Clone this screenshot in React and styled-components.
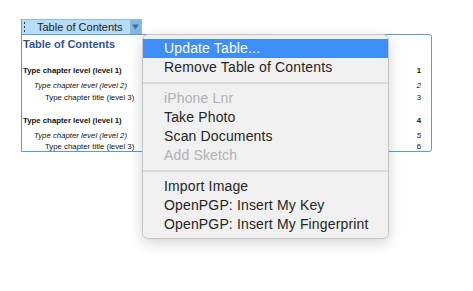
import React from "react";
import styled, { createGlobalStyle } from "styled-components";

const GlobalStyle = createGlobalStyle`
  html, body {
    margin: 0;
    padding: 0;
    background: #ffffff;
    font-family: "Liberation Sans", Arial, sans-serif;
  }
`;

const Page = styled.div`
  position: relative;
  width: 473px;
  height: 291px;
  padding: 19px 0 0 21px;
  box-sizing: border-box;
`;

const Tab = styled.div`
  display: flex;
  align-items: stretch;
  width: 121px;
  height: 15px;
  box-sizing: border-box;
  background: #b6dcf6;
  border: 1px solid #8fbde3;
  border-bottom: none;
  border-left-color: #5b9bd5;
`;

const Handle = styled.div`
  width: 5px;
  display: flex;
  flex-direction: column;
  justify-content: center;
  align-items: center;
  gap: 2px;
  span {
    width: 1px;
    height: 2px;
    background: #1f3f66;
  }
`;

const TabLabel = styled.div`
  flex: 1;
  font-size: 11px;
  line-height: 14px;
  color: #1c1c1c;
  padding-left: 10px;
  white-space: nowrap;
`;

const TabArrow = styled.div`
  width: 11px;
  background: #86b7df;
  display: flex;
  align-items: center;
  justify-content: center;
`;

const Box = styled.div`
  width: 411px;
  height: 118px;
  box-sizing: border-box;
  border: 1px solid #5b9bd5;
  border-radius: 0 3px 3px 0;
  padding: 1px 10px 0 1px;
  font-family: "Liberation Sans", Arial, sans-serif;
`;

const Heading = styled.div`
  font-size: 11px;
  line-height: 16px;
  font-weight: bold;
  color: #2f5496;
  margin-bottom: 13px;
`;

const Entry = styled.div`
  display: flex;
  justify-content: space-between;
  font-size: 7.8px;
  line-height: 11px;
  color: #111;
  margin-top: ${(p) => p.$gap}px;
  padding-left: ${(p) => (p.$level - 1) * 11}px;
  font-weight: ${(p) => (p.$level === 1 ? "bold" : "normal")};
  font-style: ${(p) => (p.$level === 2 ? "italic" : "normal")};
`;

const Menu = styled.div`
  position: absolute;
  left: 142px;
  top: 34px;
  width: 247px;
  box-sizing: border-box;
  padding: 4px 0;
  background: #f0f0f0;
  border: 1px solid #c6c6c6;
  border-radius: 6px;
  box-shadow: 0 4px 14px rgba(0, 0, 0, 0.18);
  font-family: "Liberation Sans", Arial, sans-serif;
`;

const Item = styled.div`
  height: 19px;
  line-height: 19px;
  padding-left: 21px;
  font-size: 14px;
  letter-spacing: 0.15px;
  white-space: nowrap;
  color: ${(p) => (p.$active ? "#ffffff" : p.$disabled ? "#b1b1b1" : "#252525")};
  background: ${(p) => (p.$active ? "#3d8ef6" : "transparent")};
`;

const Separator = styled.div`
  height: 2px;
  background: #dadada;
  margin: 5px 0 5px;
`;

const toc = [
  { level: 1, text: "Type chapter level (level 1)", num: "1", gap: 0 },
  { level: 2, text: "Type chapter level (level 2)", num: "2", gap: 4 },
  { level: 3, text: "Type chapter title (level 3)", num: "3", gap: 1 },
  { level: 1, text: "Type chapter level (level 1)", num: "4", gap: 12 },
  { level: 2, text: "Type chapter level (level 2)", num: "5", gap: 4 },
  { level: 3, text: "Type chapter title (level 3)", num: "6", gap: 0 },
];

const menu = [
  [{ label: "Update Table...", active: true }, { label: "Remove Table of Contents" }],
  [
    { label: "iPhone Lnr", disabled: true },
    { label: "Take Photo" },
    { label: "Scan Documents" },
    { label: "Add Sketch", disabled: true },
  ],
  [
    { label: "Import Image" },
    { label: "OpenPGP: Insert My Key" },
    { label: "OpenPGP: Insert My Fingerprint" },
  ],
];

export default function App() {
  return (
    <Page>
      <GlobalStyle />
      <Tab>
        <Handle>
          <span />
          <span />
          <span />
        </Handle>
        <TabLabel>Table of Contents</TabLabel>
        <TabArrow>
          <svg width="7" height="6" viewBox="0 0 7 6">
            <path d="M0 0.5 L7 0.5 L3.5 5.5 Z" fill="#2f6fb6" />
          </svg>
        </TabArrow>
      </Tab>
      <Box>
        <Heading>Table of Contents</Heading>
        {toc.map((e, i) => (
          <Entry key={i} $level={e.level} $gap={e.gap}>
            <span>{e.text}</span>
            <span>{e.num}</span>
          </Entry>
        ))}
      </Box>
      <Menu>
        {menu.map((group, gi) => (
          <React.Fragment key={gi}>
            {gi > 0 && <Separator />}
            {group.map((it) => (
              <Item key={it.label} $active={it.active} $disabled={it.disabled}>
                {it.label}
              </Item>
            ))}
          </React.Fragment>
        ))}
      </Menu>
    </Page>
  );
}
